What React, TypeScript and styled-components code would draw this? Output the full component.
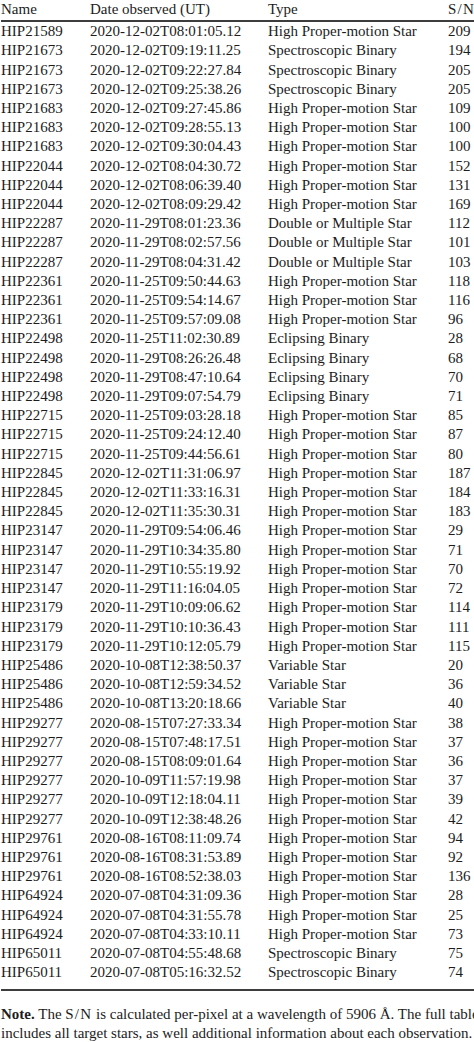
import React from "react";
import styled, { createGlobalStyle } from "styled-components";

const Global = createGlobalStyle`
  html, body { margin: 0; padding: 0; background: #ffffff; }
  body {
    font-family: "Liberation Serif", "Times New Roman", "DejaVu Serif", serif;
    color: #1c1c1c;
    overflow: hidden;
  }
`;

const Page = styled.div`
  width: 474px;
  padding-left: 1px;
  box-sizing: border-box;
`;

const Table = styled.div`
  display: flex;
  flex-direction: column;
`;

const Row = styled.div<{ $head?: boolean }>`
  display: grid;
  grid-template-columns: 89px 178px 180px 1fr;
  font-size: 15px;
  line-height: 19.2px;
  white-space: nowrap;
  ${(p) =>
    p.$head
      ? `
    padding-bottom: 1px;
    border-bottom: 2px solid #3d3d3d;
  `
      : ""}
`;

const Body = styled.div`
  display: flex;
  flex-direction: column;
  padding-bottom: 7px;
  border-bottom: 2px solid #3d3d3d;
`;

const Cell = styled.span``;

const Ratio = styled.span`
  letter-spacing: 1.2px;
`;

const Note = styled.p`
  margin: 14px 0 0 0;
  font-size: 15px;
  line-height: 19px;
  white-space: nowrap;
`;

const Bold = styled.b`
  font-weight: bold;
`;

type Obs = [string, string, string, number];

const rows: Obs[] = [
  ["HIP21589", "2020-12-02T08:01:05.12", "High Proper-motion Star", 209],
  ["HIP21673", "2020-12-02T09:19:11.25", "Spectroscopic Binary", 194],
  ["HIP21673", "2020-12-02T09:22:27.84", "Spectroscopic Binary", 205],
  ["HIP21673", "2020-12-02T09:25:38.26", "Spectroscopic Binary", 205],
  ["HIP21683", "2020-12-02T09:27:45.86", "High Proper-motion Star", 109],
  ["HIP21683", "2020-12-02T09:28:55.13", "High Proper-motion Star", 100],
  ["HIP21683", "2020-12-02T09:30:04.43", "High Proper-motion Star", 100],
  ["HIP22044", "2020-12-02T08:04:30.72", "High Proper-motion Star", 152],
  ["HIP22044", "2020-12-02T08:06:39.40", "High Proper-motion Star", 131],
  ["HIP22044", "2020-12-02T08:09:29.42", "High Proper-motion Star", 169],
  ["HIP22287", "2020-11-29T08:01:23.36", "Double or Multiple Star", 112],
  ["HIP22287", "2020-11-29T08:02:57.56", "Double or Multiple Star", 101],
  ["HIP22287", "2020-11-29T08:04:31.42", "Double or Multiple Star", 103],
  ["HIP22361", "2020-11-25T09:50:44.63", "High Proper-motion Star", 118],
  ["HIP22361", "2020-11-25T09:54:14.67", "High Proper-motion Star", 116],
  ["HIP22361", "2020-11-25T09:57:09.08", "High Proper-motion Star", 96],
  ["HIP22498", "2020-11-25T11:02:30.89", "Eclipsing Binary", 28],
  ["HIP22498", "2020-11-29T08:26:26.48", "Eclipsing Binary", 68],
  ["HIP22498", "2020-11-29T08:47:10.64", "Eclipsing Binary", 70],
  ["HIP22498", "2020-11-29T09:07:54.79", "Eclipsing Binary", 71],
  ["HIP22715", "2020-11-25T09:03:28.18", "High Proper-motion Star", 85],
  ["HIP22715", "2020-11-25T09:24:12.40", "High Proper-motion Star", 87],
  ["HIP22715", "2020-11-25T09:44:56.61", "High Proper-motion Star", 80],
  ["HIP22845", "2020-12-02T11:31:06.97", "High Proper-motion Star", 187],
  ["HIP22845", "2020-12-02T11:33:16.31", "High Proper-motion Star", 184],
  ["HIP22845", "2020-12-02T11:35:30.31", "High Proper-motion Star", 183],
  ["HIP23147", "2020-11-29T09:54:06.46", "High Proper-motion Star", 29],
  ["HIP23147", "2020-11-29T10:34:35.80", "High Proper-motion Star", 71],
  ["HIP23147", "2020-11-29T10:55:19.92", "High Proper-motion Star", 70],
  ["HIP23147", "2020-11-29T11:16:04.05", "High Proper-motion Star", 72],
  ["HIP23179", "2020-11-29T10:09:06.62", "High Proper-motion Star", 114],
  ["HIP23179", "2020-11-29T10:10:36.43", "High Proper-motion Star", 111],
  ["HIP23179", "2020-11-29T10:12:05.79", "High Proper-motion Star", 115],
  ["HIP25486", "2020-10-08T12:38:50.37", "Variable Star", 20],
  ["HIP25486", "2020-10-08T12:59:34.52", "Variable Star", 36],
  ["HIP25486", "2020-10-08T13:20:18.66", "Variable Star", 40],
  ["HIP29277", "2020-08-15T07:27:33.34", "High Proper-motion Star", 38],
  ["HIP29277", "2020-08-15T07:48:17.51", "High Proper-motion Star", 37],
  ["HIP29277", "2020-08-15T08:09:01.64", "High Proper-motion Star", 36],
  ["HIP29277", "2020-10-09T11:57:19.98", "High Proper-motion Star", 37],
  ["HIP29277", "2020-10-09T12:18:04.11", "High Proper-motion Star", 39],
  ["HIP29277", "2020-10-09T12:38:48.26", "High Proper-motion Star", 42],
  ["HIP29761", "2020-08-16T08:11:09.74", "High Proper-motion Star", 94],
  ["HIP29761", "2020-08-16T08:31:53.89", "High Proper-motion Star", 92],
  ["HIP29761", "2020-08-16T08:52:38.03", "High Proper-motion Star", 136],
  ["HIP64924", "2020-07-08T04:31:09.36", "High Proper-motion Star", 28],
  ["HIP64924", "2020-07-08T04:31:55.78", "High Proper-motion Star", 25],
  ["HIP64924", "2020-07-08T04:33:10.11", "High Proper-motion Star", 73],
  ["HIP65011", "2020-07-08T04:55:48.68", "Spectroscopic Binary", 75],
  ["HIP65011", "2020-07-08T05:16:32.52", "Spectroscopic Binary", 74],
];

export default function App() {
  return (
    <Page>
      <Global />
      <Table>
        <Row $head>
          <Cell>Name</Cell>
          <Cell>Date observed (UT)</Cell>
          <Cell>Type</Cell>
          <Cell>
            <Ratio>S/N</Ratio>
          </Cell>
        </Row>
        <Body>
          {rows.map((r, i) => (
            <Row key={i}>
              <Cell>{r[0]}</Cell>
              <Cell>{r[1]}</Cell>
              <Cell>{r[2]}</Cell>
              <Cell>{r[3]}</Cell>
            </Row>
          ))}
        </Body>
      </Table>
      <Note>
        <Bold>Note.</Bold> The <Ratio>S/N</Ratio> is calculated per-pixel at a wavelength of 5906 Å. The full table
        <br />
        includes all target stars, as well additional information about each observation.
      </Note>
    </Page>
  );
}
